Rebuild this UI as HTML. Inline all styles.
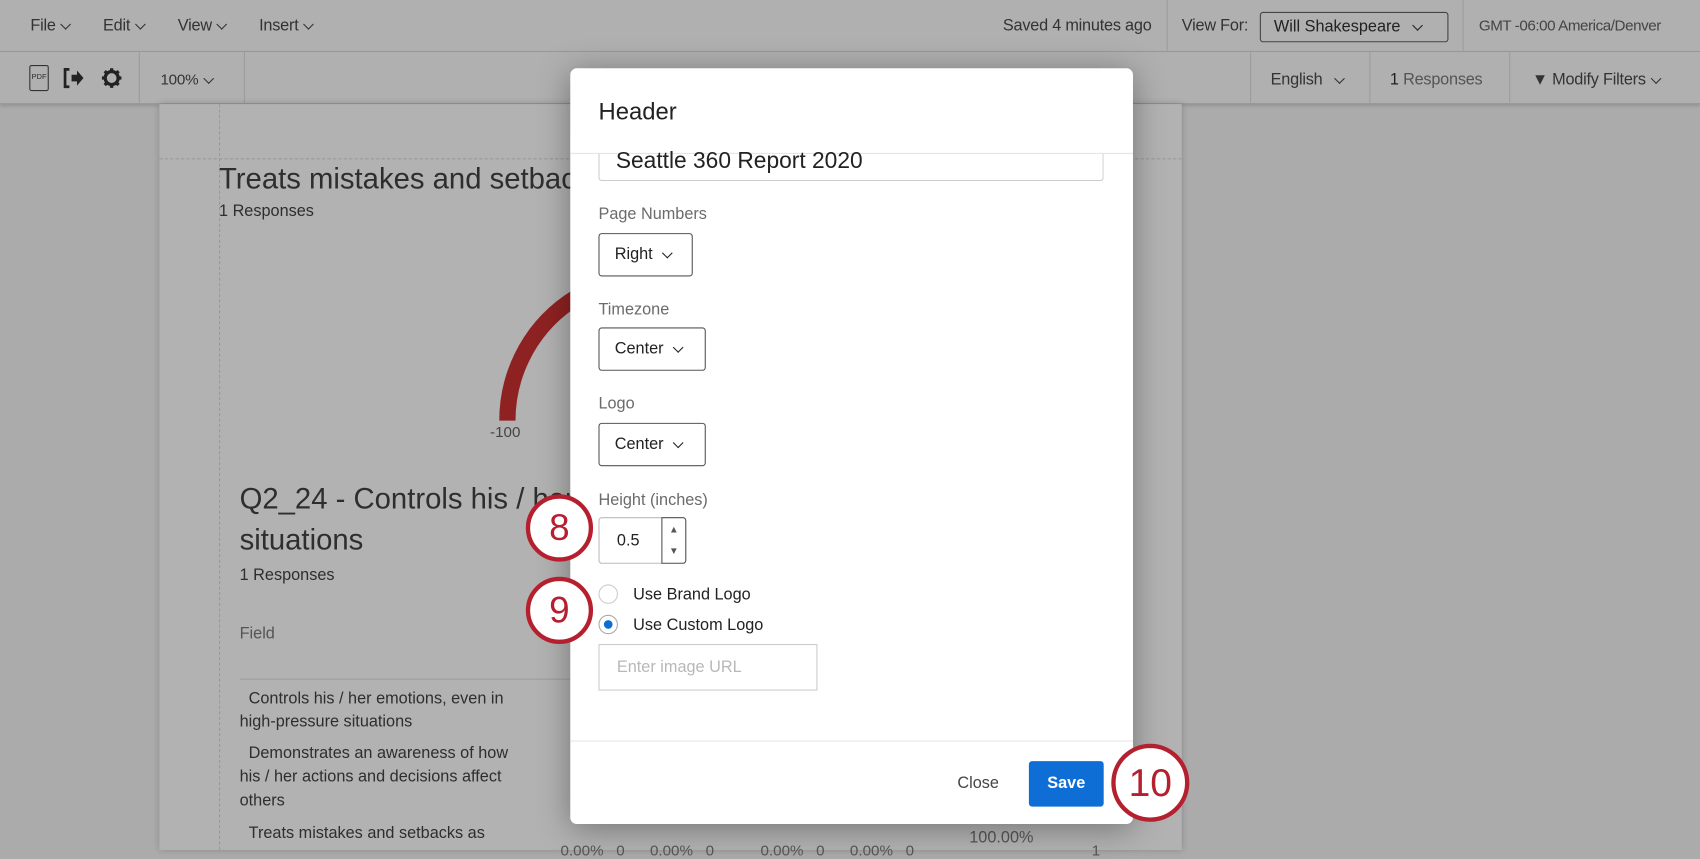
<!DOCTYPE html>
<html><head><meta charset="utf-8"><style>
*{margin:0;padding:0;box-sizing:border-box}
body{width:1700px;height:850px;overflow:hidden;background:#ababab;font-family:"Liberation Sans",sans-serif}
#w{width:1568px;height:784px;transform:scale(1.08418);transform-origin:0 0;position:relative;background:#ababab;color:#2e2e2e}
.a{position:absolute;white-space:nowrap}
.bar1{left:0;top:0;width:1568px;height:48px;background:#b0b0b0;border-bottom:1px solid #9a9a9a}
.bar2{left:0;top:48px;width:1568px;height:48px;background:#b0b0b0;border-bottom:1px solid #999;box-shadow:0 2px 3px rgba(0,0,0,.15)}
.vl{position:absolute;top:0;width:1px;height:48px;background:#9c9c9c}
.m{font-size:15px;color:#333;letter-spacing:-.2px}
.c{display:inline-block;width:7px;height:7px;border-right:1.3px solid currentColor;border-bottom:1.3px solid currentColor;transform:rotate(45deg);margin:0 0 4px 6px;vertical-align:middle}
.page{left:147px;top:96px;width:943px;height:688px;background:#b2b2b2;box-shadow:0 0 6px rgba(0,0,0,.2)}
.modal{left:526px;top:63px;width:519px;height:697px;background:#fff;border-radius:6px;box-shadow:0 4px 30px rgba(0,0,0,.35);overflow:hidden}
.lbl{font-size:15px;color:#6b6b6b}
.sel{position:absolute;border:1px solid #555;border-radius:3px;height:40px;font-size:15px;color:#222;padding:0 14px;line-height:38px}
.circ{position:absolute;width:62px;height:62px;border:4px solid #b5202e;border-radius:50%;background:#fff;color:#b5202e;font-size:34px;text-align:center;line-height:54px}
</style></head><body><div id="w">
<div class="a bar1">
 <span class="a m" style="left:28px;top:15px">File<i class="c"></i></span>
 <span class="a m" style="left:95px;top:15px">Edit<i class="c"></i></span>
 <span class="a m" style="left:164px;top:15px">View<i class="c"></i></span>
 <span class="a m" style="left:239px;top:15px">Insert<i class="c"></i></span>
 <span class="a m" style="left:925px;top:15px">Saved 4 minutes ago</span>
 <div class="vl" style="left:1076px"></div>
 <span class="a m" style="left:1090px;top:15px">View For:</span>
 <div class="a" style="left:1162px;top:11px;width:174px;height:28px;border:1px solid #444;border-radius:3px;font-size:15px;line-height:26px;padding-left:12px;color:#222">Will Shakespeare<i class="c" style="margin-left:12px"></i></div>
 <div class="vl" style="left:1349px"></div>
 <span class="a m" style="left:1364px;top:15px;color:#444;font-size:14px;letter-spacing:-.4px">GMT -06:00 America/Denver</span>
</div>
<div class="a bar2">
 <div class="a" style="left:27px;top:12px;width:18px;height:24px;border:1px solid #333;border-radius:2px;font-size:7px;line-height:22px;text-align:center">PDF</div>
 <svg class="a" style="left:58px;top:14px" width="20" height="20" viewBox="0 0 20 20"><path d="M6 2H2v16h4" fill="none" stroke="#222" stroke-width="2.5"/><path d="M8 7h5V3l6 7-6 7v-4H8z" fill="#222"/></svg>
 <svg class="a" style="left:93px;top:14px" width="20" height="20" viewBox="0 0 20 20"><circle cx="10" cy="10" r="6" fill="none" stroke="#222" stroke-width="3"/><g stroke="#222" stroke-width="3"><path d="M10 1v4M10 15v4M1 10h4M15 10h4M3.6 3.6l3 3M13.4 13.4l3 3M3.6 16.4l3-3M13.4 6.6l3-3"/></g></svg>
 <div class="vl" style="left:128px"></div>
 <span class="a m" style="left:148px;top:17px;font-size:14px">100%<i class="c"></i></span>
 <div class="vl" style="left:225px"></div>
 <div class="vl" style="left:1153px"></div>
 <span class="a m" style="left:1172px;top:17px">English<i class="c" style="margin-left:12px"></i></span>
 <div class="vl" style="left:1263px"></div>
 <span class="a m" style="left:1282px;top:17px;color:#555"><span style="color:#222">1</span> Responses</span>
 <div class="vl" style="left:1392px"></div>
 <span class="a m" style="left:1413px;top:17px">▼ Modify Filters<i class="c"></i></span>
</div>
<div class="a page">
 <div class="a" style="left:55px;top:0;height:688px;border-left:1px dashed #999"></div>
 <div class="a" style="left:0;top:50px;width:943px;border-top:1px dashed #999"></div>
 <span class="a" style="left:55px;top:54px;font-size:27px">Treats mistakes and setbacks</span>
 <span class="a" style="left:55px;top:90px;font-size:15px">1 Responses</span>
 <svg class="a" style="left:300px;top:150px" width="400" height="160"><path d="M21 142A133 133 0 0 1 200 17" fill="none" stroke="#8e2222" stroke-width="15"/></svg>
 <span class="a" style="left:305px;top:294px;font-size:14px;color:#444">-100</span>
 <span class="a" style="left:74px;top:345px;font-size:27px;line-height:38px">Q2_24 - Controls his / her emotions<br>situations</span>
 <span class="a" style="left:74px;top:426px;font-size:15px">1 Responses</span>
 <span class="a" style="left:74px;top:480px;font-size:15px;color:#555">Field</span>
 <div class="a" style="left:74px;top:530px;width:820px;border-top:1px solid #9e9e9e"></div>
 <div class="a" style="left:74px;top:538px;font-size:15px;line-height:21px;white-space:normal;width:280px">&nbsp;&nbsp;Controls his / her emotions, even in high-pressure situations</div>
 <div class="a" style="left:74px;top:588px;font-size:15px;line-height:22px;white-space:normal;width:268px">&nbsp;&nbsp;Demonstrates an awareness of how his / her actions and decisions affect others</div>
 <div class="a" style="left:74px;top:664px;font-size:15px">&nbsp;&nbsp;Treats mistakes and setbacks as</div>
 <span class="a" style="left:370px;top:680px;font-size:14px;color:#555">0.00% &nbsp; 0 &nbsp;&nbsp;&nbsp;&nbsp; 0.00% &nbsp; 0 &nbsp;&nbsp;&nbsp;&nbsp;&nbsp;&nbsp;&nbsp;&nbsp;&nbsp; 0.00% &nbsp; 0 &nbsp;&nbsp;&nbsp;&nbsp; 0.00% &nbsp; 0</span>
 <span class="a" style="left:747px;top:668px;font-size:15px;color:#555">100.00%</span>
 <span class="a" style="left:860px;top:680px;font-size:14px;color:#555">1</span>
</div>
<div class="a modal">
 <span class="a" style="left:26px;top:27px;font-size:22px;color:#222">Header</span>
 <div class="a" style="left:26px;top:60px;width:466px;height:44px;border:1px solid #ccc;border-top:none;border-radius:0 0 3px 3px"></div>
 <div class="a" style="left:0;top:60px;width:519px;height:18px;background:#fff"></div>
 <div class="a" style="left:0;top:78px;width:519px;border-top:1px solid #e4e4e4"></div>
 <span class="a" style="left:42px;top:74px;font-size:21px;color:#222">Seattle 360 Report 2020</span>
 <span class="a lbl" style="left:26px;top:126px">Page Numbers</span>
 <div class="sel" style="left:26px;top:152px;width:87px">Right<i class="c" style="margin-left:10px"></i></div>
 <span class="a lbl" style="left:26px;top:214px">Timezone</span>
 <div class="sel" style="left:26px;top:239px;width:99px">Center<i class="c" style="margin-left:10px"></i></div>
 <span class="a lbl" style="left:26px;top:301px">Logo</span>
 <div class="sel" style="left:26px;top:327px;width:99px">Center<i class="c" style="margin-left:10px"></i></div>
 <span class="a lbl" style="left:26px;top:390px">Height (inches)</span>
 <div class="a" style="left:26px;top:414px;width:81px;height:43px;border:1px solid #bbb;border-radius:3px;font-size:15px;line-height:41px;padding-left:16px;color:#222">0.5</div>
 <div class="a" style="left:84px;top:414px;width:23px;height:43px;border:1px solid #555;border-radius:0 3px 3px 0;font-size:9px;text-align:center;line-height:20px;color:#555;background:#fff">▲<br>▼</div>
 <div class="a" style="left:26px;top:476px;width:18px;height:18px;border:1px solid #ccc;border-radius:50%"></div>
 <span class="a" style="left:58px;top:477px;font-size:15px;color:#222">Use Brand Logo</span>
 <div class="a" style="left:26px;top:504px;width:18px;height:18px;border:1px solid #aaa;border-radius:50%"><div style="margin:4px;width:8px;height:8px;border-radius:50%;background:#0f6ed6"></div></div>
 <span class="a" style="left:58px;top:505px;font-size:15px;color:#222">Use Custom Logo</span>
 <div class="a" style="left:26px;top:531px;width:202px;height:43px;border:1px solid #ccc;font-size:15px;line-height:41px;padding-left:16px;color:#b8b8b8">Enter image URL</div>
 <div class="a" style="left:0;top:620px;width:519px;border-top:1px solid #e4e4e4"></div>
 <span class="a" style="left:357px;top:651px;font-size:15px;color:#444">Close</span>
 <div class="a" style="left:423px;top:639px;width:69px;height:42px;background:#0f6ed6;border-radius:3px;color:#fff;font-size:15px;line-height:42px;text-align:center;font-weight:bold">Save</div>
</div>
<div class="circ" style="left:485px;top:456px">8</div>
<div class="circ" style="left:485px;top:532px">9</div>
<div class="circ" style="left:1025px;top:686px;width:72px;height:72px;line-height:64px;font-size:36px">10</div>
</div></body></html>
